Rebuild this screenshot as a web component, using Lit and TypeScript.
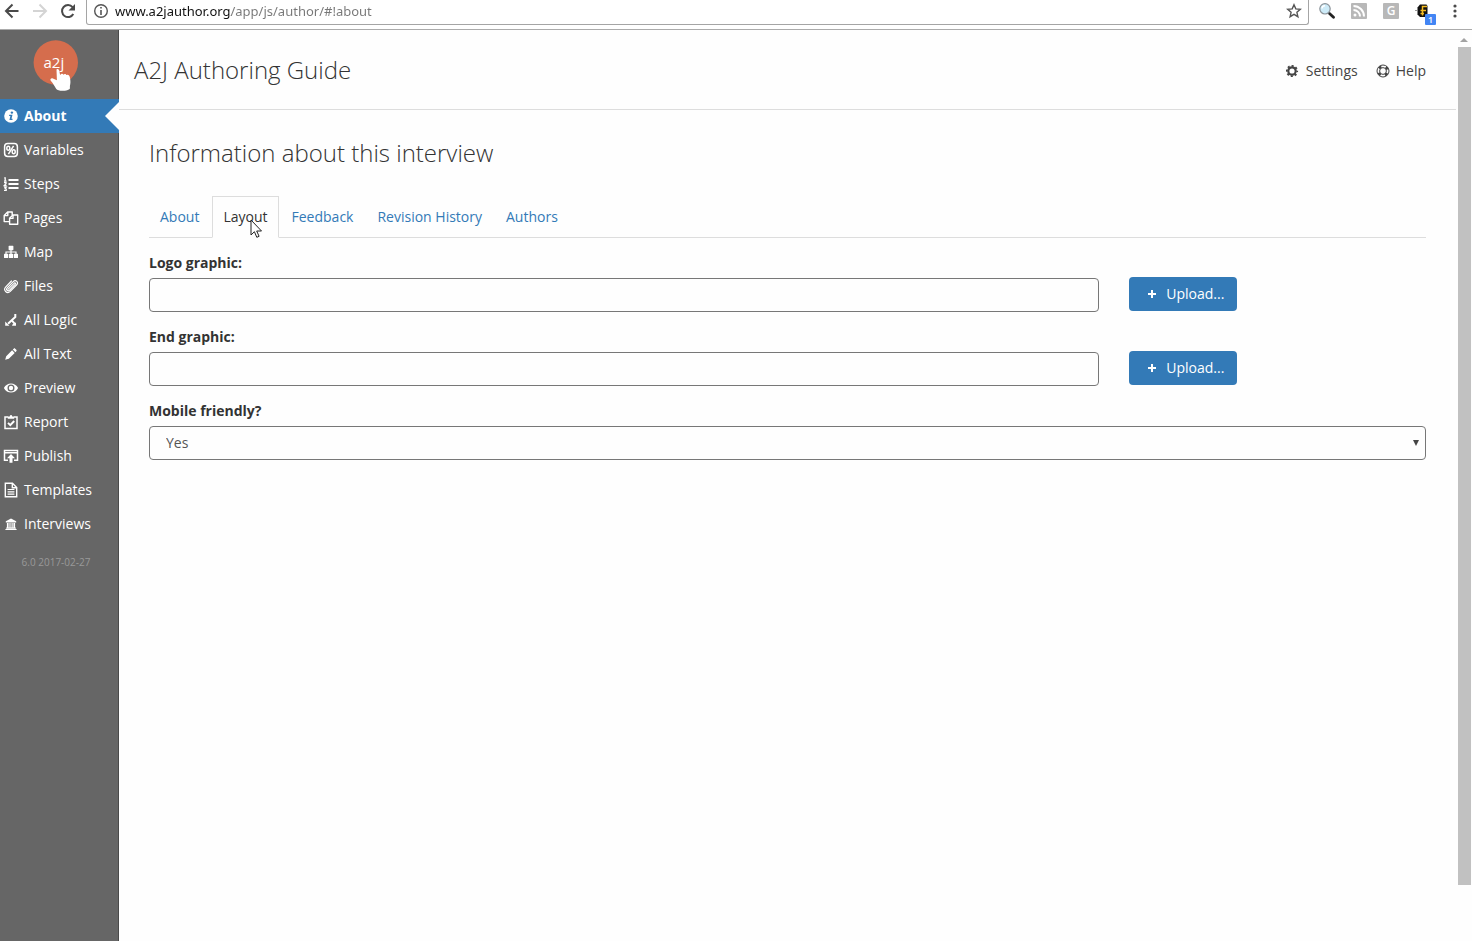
import { LitElement, html, css, svg } from "lit";
import { customElement, state } from "lit/decorators.js";
import { classMap } from "lit/directives/class-map.js";

const icons: Record<string, unknown> = {
  About: svg`<circle cx="8" cy="8" r="6.8" fill="currentColor"/><g fill="var(--cut)"><circle cx="8.9" cy="4.6" r="1.2"/><path d="M6.3 6.7h3.2l-1 4h1v1.2H6.4l1-4H6z"/></g>`,
  Variables: svg`<rect x="1.6" y="1.6" width="12.8" height="12.8" rx="3.2" fill="none" stroke="currentColor" stroke-width="1.5"/><g fill="none" stroke="currentColor" stroke-width="1.5"><ellipse cx="5.3" cy="6.2" rx="1.5" ry="2"/><ellipse cx="10.7" cy="9.8" rx="1.5" ry="2"/><path d="M10.6 3.8L5.4 12.2"/></g>`,
  Steps: svg`<g fill="currentColor"><path d="M5.500 3h10v2h-10zM5.500 7h10v2h-10zM5.500 11h10v2h-10z"/></g><path d="M1.200 1.800h1V5M1 5.200h2.600M1 6.600h2v1.200L1.200 9.600h2.400M1 11.200h2.200l-1 1.200 1 .6v1.400H1" fill="none" stroke="currentColor" stroke-width="1.300"/>`,
  Pages: svg`<g fill="none" stroke="currentColor" stroke-width="1.4" stroke-linejoin="round"><path d="M6.400 11.600H1.200V5.400L4.600 2h4.600v3"/><path d="M4.800 2v3.600H1.200"/><path d="M6.600 8.200L9.800 5h4.900v9.300H6.600z"/><path d="M10 5v3.400H6.600"/></g>`,
  Map: svg`<g fill="currentColor"><rect x="5.6" y="1.8" width="4.8" height="4.4" rx=".6"/><rect x="1" y="9.8" width="4.2" height="4.2" rx=".6"/><rect x="5.9" y="9.8" width="4.2" height="4.2" rx=".6"/><rect x="10.8" y="9.8" width="4.2" height="4.2" rx=".6"/></g><path d="M8 5v5M3 10V8h10v2" fill="none" stroke="currentColor" stroke-width="1.2"/>`,
  Files: svg`<path d="M5.2 11.200l5.700-5.900c1-1.100 2.200 0 1.200 1.100L6.500 12.200c-1.700 1.600-4-.6-2.300-2.400l6-6.200c2.600-2.400 5.800.8 3.300 3.400l-6.200 6.400c-3.300 3-7.600-1.300-4.500-4.600l5.600-5.800" fill="none" stroke="currentColor" stroke-width="1.200" stroke-linecap="round"/>`,
  "All Logic": svg`<path d="M12.300 2v3L9.800 7.200 5 11.800M8.800 8.400l3 3.400" fill="none" stroke="currentColor" stroke-width="2"/><path d="M2.200 13.800V9.600l4.200 4.200zM9 13.800l.8-1.800 3.200-1.600v3.400z" fill="currentColor"/>`,
  "All Text": svg`<path d="M2.200 13.800l1-3.600 5.900-5.900 2.600 2.600L5.800 12.800zM9.800 3.600l.9-.9c.5-.5 1-.5 1.500 0l1.100 1.100c.5.500.5 1 0 1.500l-.9.900z" fill="currentColor"/>`,
  Preview: svg`<path fill-rule="evenodd" d="M.9 8C3.800 1.900 12.200 1.900 15.100 8 12.200 14.100 3.800 14.100.9 8zM8 4.500a3.500 3.500 0 1 0 0 7 3.500 3.500 0 0 0 0-7z" fill="currentColor"/><circle cx="8" cy="8" r="2.2" fill="currentColor"/>`,
  Report: svg`<path d="M5 3H2v11.500h12V3h-3" fill="none" stroke="currentColor" stroke-width="1.500"/><path d="M4.800 2.400h2c0-2 2.400-2 2.400 0h2v2.400H4.800z" fill="currentColor"/><path d="M5 8.800l2.300 2.400L11.200 7" fill="none" stroke="currentColor" stroke-width="1.900"/>`,
  Publish: svg`<path d="M5 12.200H1.500V2.400h13v9.800H11M1.500 4.700h13" fill="none" stroke="currentColor" stroke-width="1.500"/><path d="M8 6l4 4.200H9.500v4.600h-3v-4.600H4z" fill="currentColor"/>`,
  Templates: svg`<path d="M2.300 1.300h7.200l4.200 4.200v9.200H2.300z M9.300 1.300v4.400h4.400" fill="none" stroke="currentColor" stroke-width="1.400"/><path d="M4.600 7.500h6.800M4.600 9.800h6.800M4.600 12.100h6.800" stroke="currentColor" stroke-width="1.200"/>`,
  Interviews: svg`<path d="M8 2.400l5.200 2.800v1.300H2.800V5.200zM3.900 7h1.700v4.600H3.900zM6.400 7h1.200v4.600H6.400zM8.500 7h1.200v4.600H8.500zM10.400 7h1.700v4.600h-1.700zM3.200 11.600h9.600v1.200H3.200zM2.400 13h11.200v1H2.400z" fill="currentColor"/>`,
};

const tabs = ["About", "Layout", "Feedback", "Revision History", "Authors"];

@customElement("browser-bar")
class BrowserBar extends LitElement {
  static styles = css`
    :host { display: flex; height: 29px; background: #fff; border-bottom: 1px solid #ababab; font-family: "Open Sans", sans-serif; }
    button { border: 0; padding: 0; background: none; display: grid; place-items: center; }
    svg { display: block; }
    .nav { display: flex; gap: 12px; padding-left: 4px; height: 22px; align-items: center; }
    .address { flex: 1; display: flex; align-items: center; gap: 6px; height: 22px; margin-left: 10px; padding: 0 6px 2px; border: 1px solid #a5a5a5; border-top: 0; border-radius: 0 0 3px 3px; }
    .url { flex: 1; min-width: 0; border: 0; padding: 0; outline: 0; height: 20px; font: 13px/20px "Noto Sans", "Open Sans", sans-serif; color: transparent; background: linear-gradient(90deg, #111 116px, #777 116px); background-clip: text; -webkit-background-clip: text; }
    .extensions { display: flex; gap: 16px; padding: 0 9px 0 10px; height: 22px; align-items: center; }
    .tile { width: 16px; height: 16px; background: #b8b8b8; color: #fff; border-radius: 1px; font: 600 12px/16px "Open Sans", sans-serif; }
    .badged { position: relative; width: 16px; height: 16px; }
    .badge { position: absolute; left: 10px; top: 11px; width: 11px; height: 11px; border-radius: 1px; background: #4285f4; color: #fff; font: 600 9px/11px "Open Sans", sans-serif; text-align: center; }
  `;
  render() {
    return html`
      <div class="nav">
        <button aria-label="Back"><svg width="16" height="16" viewBox="0 0 16 16" fill="none" stroke="#4a4a4a" stroke-width="2"><path d="M14.500 8H2.500M8.500 1.500L2 8l6.500 6.500"/></svg></button>
        <button aria-label="Forward"><svg width="16" height="16" viewBox="0 0 16 16" fill="none" stroke="#d4d4d4" stroke-width="2"><path d="M1 8h12.500M7.500 1.500L14 8l-6.500 6.500"/></svg></button>
        <button aria-label="Reload"><svg width="16" height="16" viewBox="0 0 16 16"><path d="M13.300 11A6 6 0 1 1 12.600 4.200" fill="none" stroke="#4a4a4a" stroke-width="2"/><path d="M15 1v6.500H8.500z" fill="#4a4a4a"/></svg></button>
      </div>
      <div class="address">
        <svg width="16" height="16" viewBox="0 0 16 16"><circle cx="8" cy="8" r="6.300" fill="none" stroke="#555" stroke-width="1.400"/><path d="M7.200 4h1.600v1.600H7.200zM7.200 7h1.600v5H7.200z" fill="#555"/></svg>
        <input class="url" aria-label="Address" .value=${"www.a2jauthor.org/app/js/author/#!about"} />
        <button aria-label="Bookmark"><svg width="16" height="16" viewBox="0 0 16 16"><path d="M8 1.800l1.800 4.100 4.500.4-3.400 3 1 4.400L8 11.400l-3.900 2.300 1-4.400-3.400-3 4.500-.4z" fill="none" stroke="#555" stroke-width="1.400"/></svg></button>
      </div>
      <div class="extensions">
        <button aria-label="Search"><svg width="16" height="16" viewBox="0 0 16 16"><path d="M10.500 10.500l4 3.800" stroke="#222" stroke-width="2.800" stroke-linecap="round"/><circle cx="6" cy="5.800" r="5.200" fill="#cdebf8" stroke="#8b9298" stroke-width="1.200"/><path d="M3 5.500A3 3 0 0 1 6 2.800" stroke="#fff" fill="none" stroke-width="1.400"/></svg></button>
        <button class="tile" aria-label="Feed"><svg width="16" height="16" viewBox="0 0 16 16"><circle cx="4" cy="12" r="1.500" fill="#fff"/><path d="M2.500 7a6.500 6.500 0 0 1 6.500 6.500M2.500 3A10.500 10.500 0 0 1 13 13.500" fill="none" stroke="#fff" stroke-width="2"/></svg></button>
        <button class="tile">G</button>
        <button class="badged" aria-label="Extension"><svg width="16" height="16" viewBox="0 0 16 16"><path d="M5 1.500h6.500l1 1.500v8l-2 3H5L2.500 11.500v-7z" fill="#111"/><path d="M0 7.500h2" stroke="#999"/><path d="M7.500 12.500V3.500H12M5.500 7.500H11M5.500 10.500H9" fill="none" stroke="#f5bd22" stroke-width="1.500"/></svg><span class="badge">1</span></button>
        <button aria-label="Menu"><svg width="16" height="16" viewBox="0 0 16 16" fill="#4a4a4a"><circle cx="8" cy="3" r="1.600"/><circle cx="8" cy="8" r="1.600"/><circle cx="8" cy="13" r="1.600"/></svg></button>
      </div>`;
  }
}

@customElement("side-nav")
class SideNav extends LitElement {
  static styles = css`
    :host { display: block; width: 118px; flex: none; background: #666; border-right: 1px solid #4a4a4a; font: 14px/20px "Open Sans", sans-serif; }
    .logo { display: block; height: 69px; }
    .logo svg { display: block; margin: 0 auto; }
    .item { position: relative; display: flex; align-items: center; gap: 5px; height: 34px; padding-left: 3px; color: #fff; text-decoration: none; --cut: #666; }
    .item svg { flex: none; }
    .item.active { background: #337ab7; font-weight: 700; --cut: #337ab7; margin-right: -1px; }
    .item.active::after { content: ""; position: absolute; right: 0; top: 3px; border: 14px solid transparent; border-left: 0; border-right-color: #fefefe; }
    .version { margin: 11px 0 0; padding-right: 6px; text-align: center; font-size: 10px; line-height: 20px; color: #999; }
  `;
  render() {
    return html`
      <a class="logo" href="#" aria-label="a2j home">
        <svg width="118" height="69" viewBox="0 0 118 69"><circle cx="55.800" cy="32.500" r="22.200" fill="#d56d4d"/><text x="43.500" y="38" font-size="15" fill="#fff">a2j</text><path d="M56.500 39.500c1.500-1 2.500 0 2.800 1.500l.8 4 1.400-1.200c.9-.4 1.600.1 2 .9l1.100-.7c.9-.2 1.500.3 1.700 1.100l1-.3c1.600-.1 2.400 1.200 2.800 3.600.6 3.200.4 5.200-.2 7.500v2.600c-1 2.700-12 3.200-13.600.5L52.600 53l-2-2.600c-.7-1.500.6-2.600 2.300-2l4 1.800z" fill="#fff"/></svg>
      </a>
      <nav>
        ${Object.keys(icons).map((name, i) => html`<a href="#!${name.toLowerCase()}" class=${classMap({ item: true, active: i === 0 })}><svg width="16" height="16" viewBox="0 0 16 16">${icons[name]}</svg>${name}</a>`)}
      </nav>
      <p class="version">6.0 2017-02-27</p>`;
  }
}

@customElement("app-root")
class AppRoot extends LitElement {
  @state() tab = "Layout";

  static styles = css`
    :host { display: flex; flex-direction: column; min-height: 100vh; background: #fefefe; color: #333; font: 14px/20px "Open Sans", sans-serif; }
    .body { flex: 1; display: flex; }
    .page { flex: 1; min-width: 0; }
    .header { display: flex; align-items: center; justify-content: space-between; height: 79px; padding: 0 30px 0 15px; border-bottom: 1px solid #ddd; }
    h1, h2 { margin: 0; font-size: 24px; line-height: 26px; font-weight: 300; }
    .links { display: flex; gap: 18px; padding-top: 2px; }
    .links a { display: flex; align-items: center; gap: 6px; color: #444; text-decoration: none; }
    main { padding: 30px; }
    .tabs { display: flex; gap: 2px; margin: 30px 0 15px; border-bottom: 1px solid #ddd; }
    .tab { position: relative; margin: 0 0 -1px; padding: 10px; border: 1px solid transparent; background: none; color: #337ab7; font: inherit; }
    .tab.active { color: #333; background: #fefefe; border-color: #ddd; border-bottom-color: #fefefe; }
    .pointer { position: absolute; left: 37px; top: 22px; }
    label { display: block; margin-bottom: 5px; font-weight: 700; }
    .field { margin-bottom: 15px; }
    .row { display: flex; align-items: flex-start; margin: 0 -15px 15px; }
    .wide { flex: none; box-sizing: border-box; width: 75%; padding: 0 15px; }
    .action { padding: 24px 15px 0; }
    .control { display: block; box-sizing: border-box; width: 100%; height: 34px; padding: 6px 16px; border: 1px solid #777; border-radius: 4px; background: #fefefe; color: #555; font: inherit; appearance: none; }
    .upload { display: flex; align-items: center; gap: 8px; height: 34px; padding: 0 13px 0 17px; border: 0; border-radius: 4px; background: #337ab7; color: #fff; font: inherit; }
    .select { position: relative; }
    .arrow { position: absolute; right: 7px; top: 14px; border: 3px solid transparent; border-top: 6px solid #444; border-bottom: 0; }
    .scrollbar { display: flex; flex-direction: column; align-items: center; width: 16px; flex: none; }
    .up { margin: 8px 0 5px; border: 4px solid transparent; border-bottom-color: #a3a3a3; border-top: 0; }
    .thumb { flex: 15; align-self: stretch; margin-left: 2px; margin-right: 1px; background: #c1c1c1; }
    .rest { flex: 1; }
  `;

  upload(id: string, text: string) {
    return html`<div class="row">
      <div class="wide"><label for=${id}>${text}</label><input class="control" id=${id} type="text" /></div>
      <div class="action"><button class="upload"><svg width="12" height="12" viewBox="0 0 12 12"><path d="M6 2v8M2 6h8" stroke="#fff" stroke-width="2"/></svg>Upload...</button></div>
    </div>`;
  }

  render() {
    return html`
      <browser-bar></browser-bar>
      <div class="body">
        <side-nav></side-nav>
        <div class="page">
          <header class="header">
            <h1>A2J Authoring Guide</h1>
            <div class="links">
              <a href="#settings"><svg width="14" height="14" viewBox="0 0 14 14"><circle cx="6" cy="7" r="3.700" fill="none" stroke="#444" stroke-width="2.200"/><circle cx="6" cy="7" r="5.200" fill="none" stroke="#444" stroke-width="1.800" stroke-dasharray="2.040 2.040" stroke-dashoffset="1.020"/></svg>Settings</a>
              <a href="#help"><svg width="14" height="14" viewBox="0 0 14 14" fill="none" stroke="#444"><circle cx="7" cy="7" r="6"/><circle cx="7" cy="7" r="3.400"/><circle cx="7" cy="7" r="4.700" stroke-width="2.600" stroke-dasharray="2.800 4.580" stroke-dashoffset="-2.300"/></svg>Help</a>
            </div>
          </header>
          <main>
            <h2>Information about this interview</h2>
            <div class="tabs" role="tablist">
              ${tabs.map((t) => html`<button role="tab" aria-selected=${t === this.tab} class=${classMap({ tab: true, active: t === this.tab })} @click=${() => (this.tab = t)}>${t}${t === "Layout" ? html`<svg class="pointer" width="13" height="20" viewBox="0 0 13 20"><path d="M1 1v15l3.400-3.300 2.400 5.600 2.300-1-2.400-5.300h4.800z" fill="#fff" stroke="#222"/></svg>` : null}</button>`)}
            </div>
            ${this.upload("logo", "Logo graphic:")}
            ${this.upload("end", "End graphic:")}
            <div class="field">
              <label for="mobile">Mobile friendly?</label>
              <div class="select"><select class="control" id="mobile"><option>Yes</option><option>No</option></select><span class="arrow"></span></div>
            </div>
          </main>
        </div>
        <div class="scrollbar" aria-hidden="true"><span class="up"></span><span class="thumb"></span><span class="rest"></span></div>
      </div>`;
  }
}
